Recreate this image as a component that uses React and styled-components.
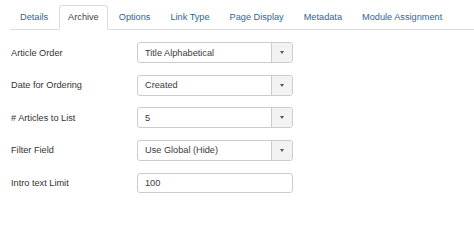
import React from "react";
import styled, { createGlobalStyle } from "styled-components";

const Global = createGlobalStyle`
  html, body { margin: 0; padding: 0; background: #fff; }
  body { font-family: "Liberation Sans", Arial, sans-serif; font-size: 9.2px; color: #333; }
`;

const Page = styled.div`
  padding-top: 5px;
`;

const Nav = styled.ul`
  list-style: none;
  display: flex;
  margin: 0 0 0 10px;
  padding: 0 0 0 1px;
  border-bottom: 1px solid #ddd;
`;

const Tab = styled.li`
  box-sizing: border-box;
  height: 25px;
  line-height: 23px;
  padding: 0 8px;
  margin: 0 2px -1px 0;
  border: 1px solid ${(p) => (p.$active ? "#ddd" : "transparent")};
  border-bottom-color: transparent;
  border-radius: 3px 3px 0 0;
  background: ${(p) => (p.$active ? "#fff" : "transparent")};
  color: ${(p) => (p.$active ? "#444" : "#2a66a0")};
  white-space: nowrap;
`;

const Form = styled.div`
  display: flex;
  flex-direction: column;
  gap: 11.5px;
  margin-top: 12px;
  padding-left: 11px;
`;

const Row = styled.div`
  display: flex;
  align-items: center;
  height: 21px;
`;

const Label = styled.label`
  width: 126px;
  color: #333;
`;

const Control = styled.div`
  box-sizing: border-box;
  display: flex;
  align-items: stretch;
  width: 156px;
  height: ${(p) => (p.$input ? "20px" : "21px")};
  border: 1px solid #ccc;
  border-radius: 3px;
  background: #fff;
  overflow: hidden;
`;

const Value = styled.div`
  flex: 1;
  display: flex;
  align-items: center;
  padding-left: 7px;
  color: #3a3a3a;
`;

const Button = styled.div`
  width: 20px;
  border-left: 1px solid #ccc;
  background: #f2f2f2;
  display: flex;
  align-items: center;
  justify-content: center;
`;

const Caret = styled.span`
  width: 0;
  height: 0;
  border-top: 3px solid #555;
  border-left: 2.5px solid transparent;
  border-right: 2.5px solid transparent;
`;

const tabs = ["Details", "Archive", "Options", "Link Type", "Page Display", "Metadata", "Module Assignment"];

const fields = [
  { label: "Article Order", value: "Title Alphabetical", select: true },
  { label: "Date for Ordering", value: "Created", select: true },
  { label: "# Articles to List", value: "5", select: true },
  { label: "Filter Field", value: "Use Global (Hide)", select: true },
  { label: "Intro text Limit", value: "100", select: false },
];

export default function App() {
  return (
    <Page>
      <Global />
      <Nav>
        {tabs.map((t) => (
          <Tab key={t} $active={t === "Archive"}>{t}</Tab>
        ))}
      </Nav>
      <Form>
        {fields.map((f) => (
          <Row key={f.label}>
            <Label>{f.label}</Label>
            <Control $input={!f.select}>
              <Value>{f.value}</Value>
              {f.select && (
                <Button>
                  <Caret />
                </Button>
              )}
            </Control>
          </Row>
        ))}
      </Form>
    </Page>
  );
}
